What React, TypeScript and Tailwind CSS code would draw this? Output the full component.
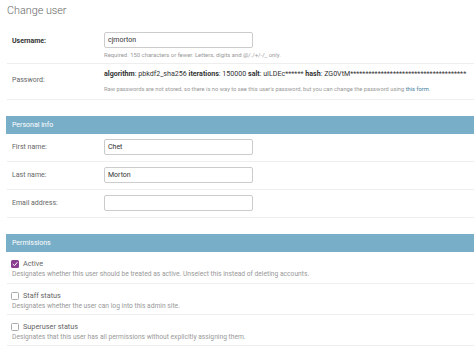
import React from "react";

type RowProps = {
    label: string,
    bold?: boolean,
    value?: string,
}

function InputRow(props: RowProps) {
    return (
        <div className="flex ml-[7px] pt-[5px] pb-[6px] border-b border-[#eeeeee]">
            <label className={`w-[97px] h-[16px] pl-[5px] text-[7px] leading-[17px] ${props.bold ? "font-bold text-[#333333]" : "text-[#666666]"}`}>
                {props.label}
            </label>
            <div className="w-[149px] h-[16px] border border-[#cccccc] rounded-[2px] px-[3px] text-[7px] leading-[14px] text-[#333333]">
                {props.value}
            </div>
        </div>
    )
}

function CheckRow(props: { label: string, help: string, checked?: boolean, pb: string }) {
    return (
        <div className={`ml-[7px] pt-[7px] border-b border-[#eeeeee] ${props.pb}`}>
            <div className="flex items-center pl-[4px] h-[9px]">
                {props.checked ? (
                    <span className="w-[8px] h-[8px] rounded-[1.5px] bg-[#8a3d8f] flex items-center justify-center">
                        <svg width="6" height="6" viewBox="0 0 12 12">
                            <path d="M2 6.5 L5 9.2 L10.2 3" stroke="white" strokeWidth="2" fill="none" strokeLinecap="round" strokeLinejoin="round" />
                        </svg>
                    </span>
                ) : (
                    <span className="w-[8px] h-[8px] rounded-[1.5px] border border-[#aaaaaa] bg-white" />
                )}
                <span className="ml-[4px] text-[7.3px] text-[#666666] leading-[9px]">{props.label}</span>
            </div>
            <div className="pl-[5px] mt-[2px] text-[6.7px] leading-[8px] text-[#999999] whitespace-nowrap">{props.help}</div>
        </div>
    )
}

function Header(props: { title: string, mt: string }) {
    return (
        <div className={`ml-[6px] h-[18px] bg-[#79aec8] text-white text-[7px] leading-[18px] pl-[6px] ${props.mt}`}>
            {props.title}
        </div>
    )
}

export default function App() {
    return (
        <div className="w-[474px] h-[349px] overflow-hidden bg-white font-['Roboto',sans-serif]">
            <h1 className="pl-[7px] pt-[3px] text-[10.8px] leading-[15px] font-light text-[#666666]">Change user</h1>

            {/* username */}
            <div className="flex ml-[7px] mt-[8px] pt-[6px] pb-[4px] border-b border-[#eeeeee]">
                <label className="w-[97px] pl-[5px] text-[7px] leading-[18px] font-bold text-[#333333]">Username:</label>
                <div>
                    <div className="w-[149px] h-[16px] border border-[#cccccc] rounded-[2px] px-[3px] text-[7px] leading-[14px] text-[#333333]">cjmorton</div>
                    <div className="mt-[3px] text-[5.9px] leading-[8px] text-[#999999] whitespace-nowrap">Required. 150 characters or fewer. Letters, digits and @/./+/-/_ only.</div>
                </div>
            </div>

            {/* password */}
            <div className="flex ml-[7px] pt-[5px] pb-[6px] border-b border-[#eeeeee]">
                <label className="w-[97px] pl-[5px] mt-[6px] text-[7px] leading-[10px] text-[#666666]">Password:</label>
                <div>
                    <div className="text-[7.1px] leading-[10px] text-[#333333] whitespace-nowrap">
                        <strong>algorithm</strong>: pbkdf2_sha256 <strong>iterations</strong>: 150000 <strong>salt</strong>: uILDEc****** <strong>hash</strong>: ZG0VtM**************************************
                    </div>
                    <div className="mt-[6px] text-[5.75px] leading-[8px] text-[#999999] whitespace-nowrap">
                        Raw passwords are not stored, so there is no way to see this user's password, but you can change the password using <span className="text-[#447e9b]">this form</span>.
                    </div>
                </div>
            </div>

            <Header title="Personal info" mt="mt-[16px]" />
            <InputRow label="First name:" value="Chet" />
            <InputRow label="Last name:" value="Morton" />
            <InputRow label="Email address:" value="" />

            <Header title="Permissions" mt="mt-[16px]" />
            <CheckRow label="Active" checked pb="pb-[5px]" help="Designates whether this user should be treated as active. Unselect this instead of deleting accounts." />
            <CheckRow label="Staff status" pb="pb-[4px]" help="Designates whether the user can log into this admin site." />
            <CheckRow label="Superuser status" pb="pb-[4px]" help="Designates that this user has all permissions without explicitly assigning them." />
        </div>
    )
}
